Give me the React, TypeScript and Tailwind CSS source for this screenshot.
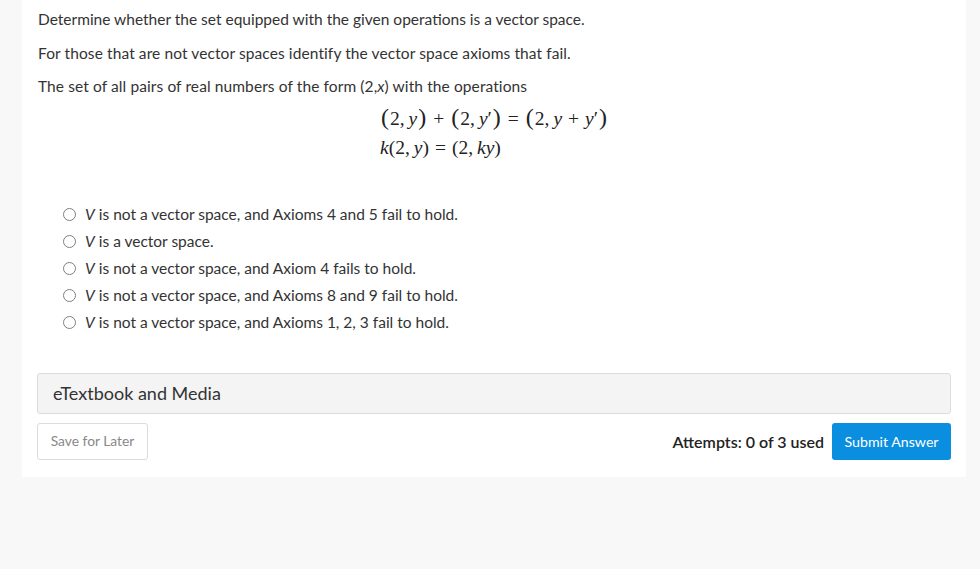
const options = [
  "is not a vector space, and Axioms 4 and 5 fail to hold.",
  "is a vector space.",
  "is not a vector space, and Axiom 4 fails to hold.",
  "is not a vector space, and Axioms 8 and 9 fail to hold.",
  "is not a vector space, and Axioms 1, 2, 3 fail to hold.",
]

function Op({ c }: { c: string }) {
  return <span className="mx-[6px]">{c}</span>
}

function P({ c }: { c: string }) {
  return <span className="text-[24px] leading-none mx-[1px]">{c}</span>
}

function MathBlock() {
  return (
    <div className="flex justify-center mt-[8px]">
      <div className="flex flex-col text-[19.5px] leading-[29px] text-[#222] font-['Liberation_Serif',serif]">
        <div className="whitespace-nowrap">
          <P c="(" />2,<span className="ml-[4px]" /><i>y</i><P c=")" />
          <Op c="+" />
          <P c="(" />2,<span className="ml-[4px]" /><i>y</i>′<P c=")" />
          <Op c="=" />
          <P c="(" />2,<span className="ml-[4px]" /><i>y</i>
          <Op c="+" />
          <i>y</i>′<P c=")" />
        </div>
        <div className="whitespace-nowrap">
          <i>k</i>(2,<span className="ml-[4px]" /><i>y</i>)<Op c="=" />(2,<span className="ml-[4px]" /><i>ky</i>)
        </div>
      </div>
    </div>
  )
}

export default function App() {
  return (
    <div className="min-h-[569px] bg-[#f8f8f8] font-['Lato','Liberation_Sans',sans-serif]">
      <div className="ml-[22px] w-[944px] bg-white pt-[9px] pb-[17px] px-[15px] text-[#333]">
        <div className="pl-px text-[15.5px] leading-[20px]">
          <p className="mb-[14px]">Determine whether the set equipped with the given operations is a vector space.</p>
          <p className="mb-[13px] tracking-[0.1px]">For those that are not vector spaces identify the vector space axioms that fail.</p>
          <p className="tracking-[0.1px]">The set of all pairs of real numbers of the form (2,<i>x</i>) with the operations</p>
        </div>

        <MathBlock />

        <ul className="mt-[39px] pl-[26px] text-[15.5px]">
          {options.map((o) => (
            <li key={o} className="flex items-center h-[27px]">
              <span className="w-[13px] h-[13px] rounded-full border border-[#808080] bg-white mr-[9px]" />
              <span>
                <i>V</i> {o}
              </span>
            </li>
          ))}
        </ul>

        <div className="mt-[37px] h-[41px] flex items-center px-[15px] bg-[#f4f4f4] border border-[#dcdcdc] rounded-[3px] text-[18px] text-[#333]">
          eTextbook and Media
        </div>

        <div className="mt-[9px] flex items-center justify-between">
          <button className="h-[37px] w-[111px] border border-[#dcdcdc] rounded-[3px] bg-white text-[13.8px] text-[#888]">
            Save for Later
          </button>
          <div className="flex items-center gap-[8px]">
            <span className="text-[16px] font-semibold text-[#222]">Attempts: 0 of 3 used</span>
            <button className="h-[37px] w-[119px] rounded-[3px] bg-[#0a8ee0] text-[14.2px] text-white">
              Submit Answer
            </button>
          </div>
        </div>
      </div>
    </div>
  )
}
